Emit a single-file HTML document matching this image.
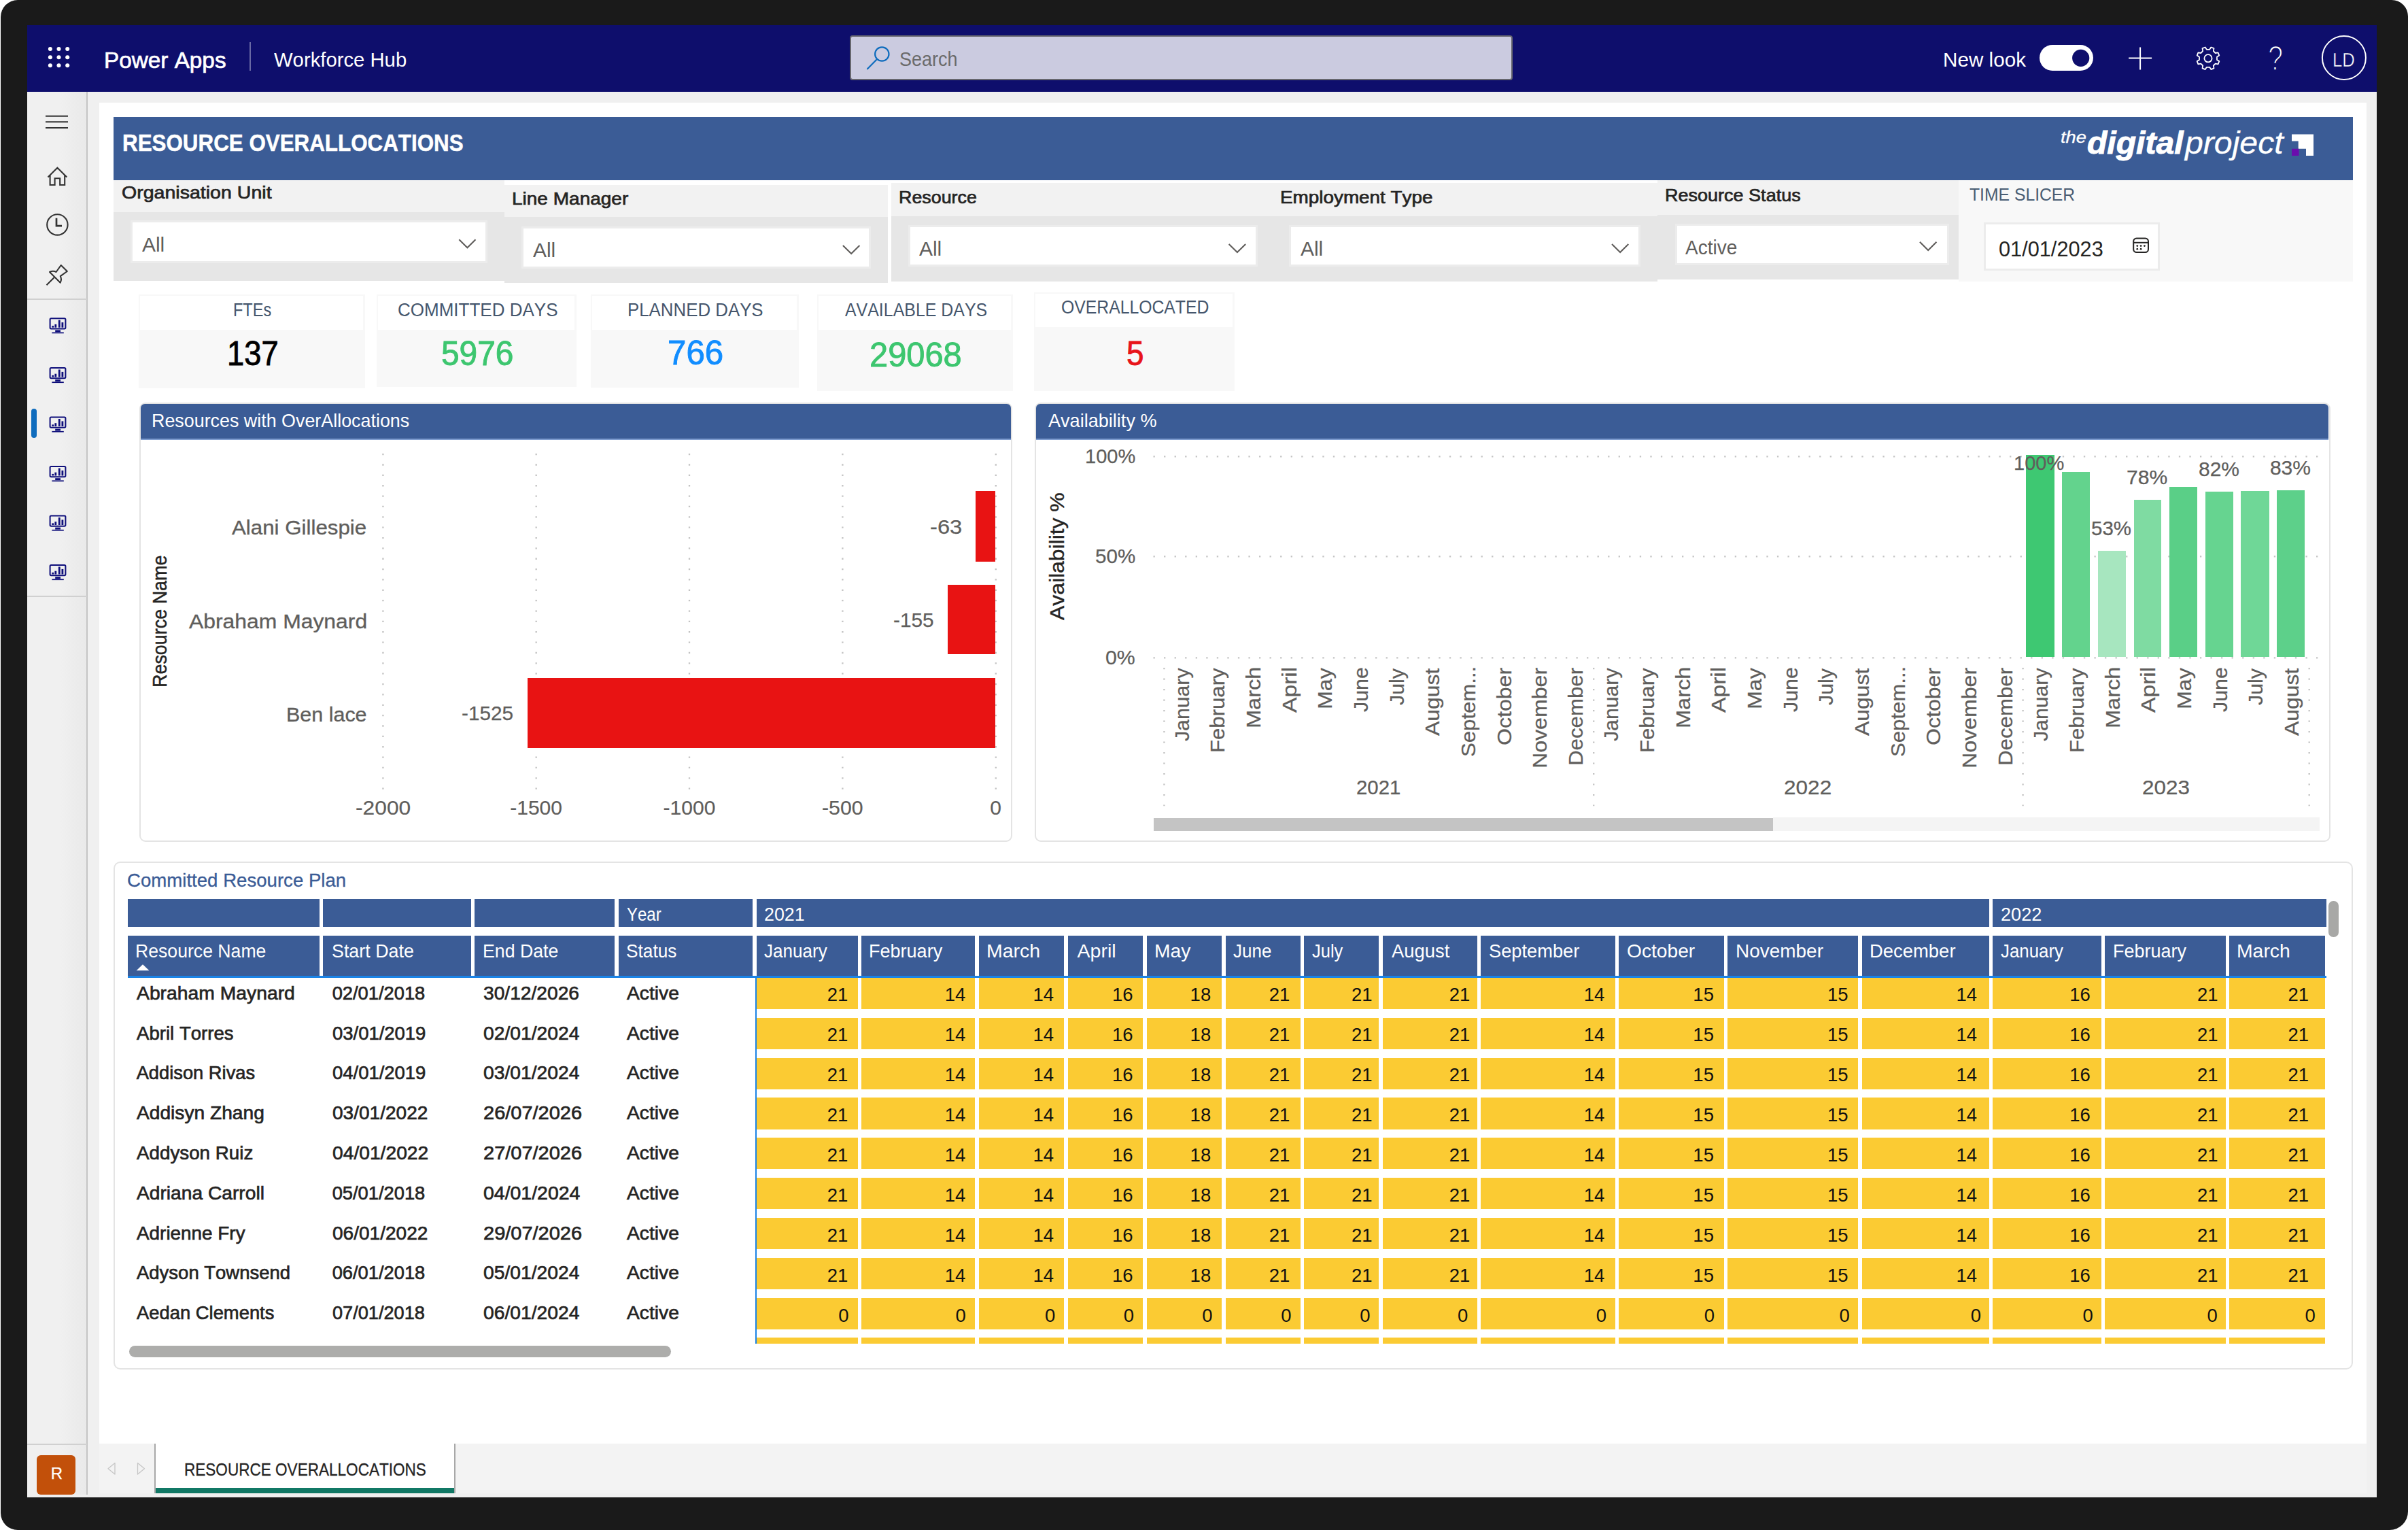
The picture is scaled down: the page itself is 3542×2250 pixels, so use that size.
<!DOCTYPE html>
<html lang="en"><head><meta charset="utf-8"><title>Resource Overallocations - Workforce Hub</title>
<style>
html,body{margin:0;padding:0}
body{width:3542px;height:2250px;position:relative;overflow:hidden;background:#fff;font-family:"Liberation Sans",sans-serif;font-kerning:none;}
.b{position:absolute;box-sizing:border-box}
.t{position:absolute;white-space:nowrap;line-height:1em;display:block;transform-origin:0 0}
.rw{position:absolute;width:0;height:0;transform:rotate(-90deg);transform-origin:0 0}
svg.ov{position:absolute;left:0;top:0;width:3542px;height:2250px;pointer-events:none}
</style></head><body>
<div class="b" style="left:1.0px;top:0.0px;width:3541.0px;height:2250.0px;background:#1a1a1a;border-radius:25px 24px 27px 25px;"></div>
<div class="b" style="left:40.0px;top:37.0px;width:3456.0px;height:2165.0px;background:#f0f0f0;"></div>
<div class="b" style="left:40.0px;top:37.0px;width:3456.0px;height:98.0px;background:#0e0e6c;"></div>
<span class="t" style="left:153.27px;top:72.00px;font-size:33.00px;color:#fff;-webkit-text-stroke:0.7px #fff;transform:scaleX(1.0091);">Power Apps</span>
<div class="b" style="left:367.0px;top:62.0px;width:2.0px;height:42.0px;background:rgba(255,255,255,0.38);"></div>
<span class="t" style="left:402.67px;top:73.00px;font-size:30.00px;color:#fff;transform:scaleX(0.9755);">Workforce Hub</span>
<div class="b" style="left:1250.0px;top:52.0px;width:975.0px;height:65.5px;background:#cbcbe0;border:2px solid #66666e;border-radius:4px;"></div>
<span class="t" style="left:1323.17px;top:72.00px;font-size:30.00px;color:#6b6b6b;transform:scaleX(0.8992);">Search</span>
<span class="t" style="left:2858.27px;top:74.00px;font-size:29.00px;color:#fff;transform:scaleX(1.0228);">New look</span>
<div class="b" style="left:2999.7px;top:66.4px;width:79.2px;height:37.6px;background:#fff;border-radius:19px;"></div>
<span class="t" style="left:3336.17px;top:61.00px;font-size:50.00px;color:#fff;-webkit-text-stroke:1.7px #0e0e6c;transform:scaleX(0.7949);">?</span>
<span class="t" style="left:3431.44px;top:73.00px;font-size:29.50px;color:#fff;-webkit-text-stroke:0.5px #0e0e6c;transform:scaleX(0.8707);">LD</span>
<div class="b" style="left:40.0px;top:135.0px;width:88.0px;height:2063.0px;background:linear-gradient(90deg,#f0f0f0 0%,#f0f0f0 55%,#e9e9e9 100%);"></div>
<div class="b" style="left:127.0px;top:135.0px;width:2.0px;height:2063.0px;background:#c4c4c4;"></div>
<div class="b" style="left:40.0px;top:439.0px;width:88.0px;height:2.0px;background:#d0d0d0;"></div>
<div class="b" style="left:40.0px;top:875.5px;width:88.0px;height:2.0px;background:#d0d0d0;"></div>
<div class="b" style="left:40.0px;top:2123.0px;width:88.0px;height:2.0px;background:#d0d0d0;"></div>
<div class="b" style="left:46.0px;top:600.8px;width:8.0px;height:43.0px;background:#0f6cbd;border-radius:4px;"></div>
<div class="b" style="left:53.8px;top:2140.0px;width:57.0px;height:57.6px;background:#c2500a;border-radius:6px;"></div>
<span class="t" style="left:74.71px;top:2155.00px;font-size:24.00px;color:#fff;-webkit-text-stroke:0.25px #fff;">R</span>
<div class="b" style="left:146.0px;top:151.0px;width:3335.0px;height:1972.4px;background:#fff;"></div>
<div class="b" style="left:146.0px;top:2123.4px;width:3335.0px;height:72.6px;background:#f3f3f3;"></div>
<div class="b" style="left:167.0px;top:172.0px;width:3294.0px;height:93.0px;background:#3b5c96;"></div>
<span class="t" style="left:179.90px;top:193.00px;font-size:34.50px;color:#fff;font-weight:700;-webkit-text-stroke:0.5px #fff;transform:scaleX(0.9087);">RESOURCE OVERALLOCATIONS</span>
<span class="t" style="left:3031.46px;top:190.00px;font-size:24.00px;color:#fff;font-style:italic;-webkit-text-stroke:0.3px #fff;transform:scaleX(1.1376);">the</span>
<span class="t" style="left:3070.44px;top:187.00px;font-size:46.00px;color:#fff;font-weight:700;font-style:italic;-webkit-text-stroke:0.9px #fff;transform:scaleX(1.0450);">digital</span>
<span class="t" style="left:3214.20px;top:187.00px;font-size:46.00px;color:#fff;font-style:italic;-webkit-text-stroke:0.3px #fff;transform:scaleX(1.0475);">project</span>
<div class="b" style="left:166.6px;top:265.0px;width:575.4px;height:47.1px;background:#f2f2f2;"></div>
<div class="b" style="left:166.6px;top:312.1px;width:575.4px;height:101.4px;background:#e6e6e6;"></div>
<span class="t" style="left:178.65px;top:270.00px;font-size:26.50px;color:#252423;-webkit-text-stroke:0.7px #252423;transform:scaleX(1.0773);">Organisation Unit</span>
<div class="b" style="left:192.2px;top:324.1px;width:524.9px;height:62.8px;background:#fff;border:3px solid #ececec;"></div>
<span class="t" style="left:208.74px;top:345.00px;font-size:29.50px;color:#605e5c;transform:scaleX(1.0145);">All</span>
<div class="b" style="left:742.0px;top:271.6px;width:564.3px;height:47.4px;background:#f2f2f2;"></div>
<div class="b" style="left:742.0px;top:319.0px;width:564.3px;height:97.0px;background:#e6e6e6;"></div>
<span class="t" style="left:753.00px;top:279.00px;font-size:26.50px;color:#252423;-webkit-text-stroke:0.7px #252423;transform:scaleX(1.0568);">Line Manager</span>
<div class="b" style="left:767.3px;top:333.0px;width:513.7px;height:61.5px;background:#fff;border:3px solid #ececec;"></div>
<span class="t" style="left:783.54px;top:353.00px;font-size:29.50px;color:#605e5c;transform:scaleX(1.0145);">All</span>
<div class="b" style="left:1311.3px;top:269.0px;width:1126.6px;height:48.5px;background:#f2f2f2;"></div>
<div class="b" style="left:1311.3px;top:317.5px;width:1126.6px;height:96.0px;background:#e6e6e6;"></div>
<span class="t" style="left:1322.40px;top:277.00px;font-size:26.50px;color:#252423;-webkit-text-stroke:0.7px #252423;transform:scaleX(1.0131);">Resource</span>
<div class="b" style="left:1336.2px;top:331.4px;width:514.0px;height:60.8px;background:#fff;border:3px solid #ececec;"></div>
<span class="t" style="left:1352.44px;top:351.00px;font-size:29.50px;color:#605e5c;transform:scaleX(1.0145);">All</span>
<span class="t" style="left:1883.11px;top:277.00px;font-size:26.50px;color:#252423;-webkit-text-stroke:0.7px #252423;transform:scaleX(1.0514);">Employment Type</span>
<div class="b" style="left:1896.3px;top:331.4px;width:517.0px;height:60.8px;background:#fff;border:3px solid #ececec;"></div>
<span class="t" style="left:1912.94px;top:351.00px;font-size:29.50px;color:#605e5c;transform:scaleX(1.0145);">All</span>
<div class="b" style="left:2437.9px;top:265.0px;width:443.1px;height:50.8px;background:#f2f2f2;"></div>
<div class="b" style="left:2437.9px;top:315.8px;width:443.1px;height:95.3px;background:#e6e6e6;"></div>
<span class="t" style="left:2448.98px;top:274.00px;font-size:26.50px;color:#252423;-webkit-text-stroke:0.7px #252423;transform:scaleX(1.0193);">Resource Status</span>
<div class="b" style="left:2463.5px;top:328.8px;width:403.3px;height:61.7px;background:#fff;border:3px solid #ececec;"></div>
<span class="t" style="left:2479.35px;top:349.00px;font-size:29.50px;color:#605e5c;transform:scaleX(0.9498);">Active</span>
<div class="b" style="left:2881.0px;top:265.0px;width:579.8px;height:148.5px;background:#f8f8f8;"></div>
<span class="t" style="left:2897.14px;top:273.00px;font-size:26.50px;color:#4a5d73;transform:scaleX(0.9328);">TIME SLICER</span>
<div class="b" style="left:2917.6px;top:326.8px;width:259.4px;height:71.7px;background:#fff;border:3px solid #ececec;"></div>
<span class="t" style="left:2940.30px;top:351.00px;font-size:30.50px;color:#252423;transform:scaleX(1.0072);">01/01/2023</span>
<div class="b" style="left:204.1px;top:433.0px;width:332.6px;height:138.2px;background:#f8f8f8;"></div>
<div class="b" style="left:206.1px;top:435.0px;width:327.6px;height:49.5px;background:#fff;"></div>
<span class="t" style="left:343.27px;top:443.00px;font-size:27.00px;color:#45566c;transform:scaleX(0.8711);">FTEs</span>
<span class="t" style="left:333.50px;top:495.00px;font-size:49.50px;color:#000;-webkit-text-stroke:0.9px #000;transform:scaleX(0.9158);">137</span>
<div class="b" style="left:554.3px;top:433.0px;width:293.4px;height:136.3px;background:#f8f8f8;"></div>
<div class="b" style="left:556.3px;top:435.0px;width:288.4px;height:49.5px;background:#fff;"></div>
<span class="t" style="left:584.68px;top:443.00px;font-size:27.00px;color:#45566c;transform:scaleX(0.9632);">COMMITTED DAYS</span>
<span class="t" style="left:649.38px;top:495.00px;font-size:49.50px;color:#3dc66f;-webkit-text-stroke:0.9px #3dc66f;transform:scaleX(0.9664);">5976</span>
<div class="b" style="left:869.0px;top:433.0px;width:306.0px;height:137.0px;background:#f8f8f8;"></div>
<div class="b" style="left:871.0px;top:435.0px;width:301.0px;height:49.5px;background:#fff;"></div>
<span class="t" style="left:923.23px;top:443.00px;font-size:27.00px;color:#45566c;transform:scaleX(0.9570);">PLANNED DAYS</span>
<span class="t" style="left:982.22px;top:494.00px;font-size:49.50px;color:#118dff;-webkit-text-stroke:0.9px #118dff;transform:scaleX(0.9952);">766</span>
<div class="b" style="left:1201.8px;top:433.0px;width:287.9px;height:141.8px;background:#f8f8f8;"></div>
<div class="b" style="left:1203.8px;top:435.0px;width:282.9px;height:49.5px;background:#fff;"></div>
<span class="t" style="left:1243.20px;top:443.00px;font-size:27.00px;color:#45566c;transform:scaleX(0.9231);">AVAILABLE DAYS</span>
<span class="t" style="left:1279.19px;top:497.00px;font-size:49.50px;color:#3dc66f;-webkit-text-stroke:0.9px #3dc66f;transform:scaleX(0.9864);">29068</span>
<div class="b" style="left:1521.0px;top:429.5px;width:295.0px;height:145.3px;background:#f8f8f8;"></div>
<div class="b" style="left:1523.0px;top:431.5px;width:290.0px;height:49.0px;background:#fff;"></div>
<span class="t" style="left:1561.33px;top:439.00px;font-size:27.00px;color:#45566c;transform:scaleX(0.9169);">OVERALLOCATED</span>
<span class="t" style="left:1657.32px;top:495.00px;font-size:49.50px;color:#e8141a;-webkit-text-stroke:0.9px #e8141a;transform:scaleX(0.9246);">5</span>
<div class="b" style="left:204.8px;top:591.6px;width:1284.4px;height:646.0px;background:#fff;border:2.2px solid #e4e4e4;border-radius:9px;"></div>
<div class="b" style="left:207.0px;top:594.0px;width:1280.0px;height:53.0px;background:#3b5c96;border-radius:6px 6px 0 0;border-bottom:2px solid #7f9dd0;"></div>
<span class="t" style="left:223.40px;top:604.00px;font-size:28.50px;color:#fff;transform:scaleX(0.9425);">Resources with OverAllocations</span>
<div class="b" style="left:1521.6px;top:591.6px;width:1906.0px;height:646.0px;background:#fff;border:2.2px solid #e4e4e4;border-radius:9px;"></div>
<div class="b" style="left:1523.8px;top:594.0px;width:1901.6px;height:53.0px;background:#3b5c96;border-radius:6px 6px 0 0;border-bottom:2px solid #7f9dd0;"></div>
<span class="t" style="left:1542.25px;top:604.00px;font-size:28.50px;color:#fff;transform:scaleX(0.9501);">Availability %</span>
<svg class="ov" viewBox="0 0 3542 2250"><circle cx="73.9" cy="72.1" r="3" fill="#fff"/>
<circle cx="73.9" cy="84.2" r="3" fill="#fff"/>
<circle cx="73.9" cy="96.3" r="3" fill="#fff"/>
<circle cx="86.5" cy="72.1" r="3" fill="#fff"/>
<circle cx="86.5" cy="84.2" r="3" fill="#fff"/>
<circle cx="86.5" cy="96.3" r="3" fill="#fff"/>
<circle cx="99.2" cy="72.1" r="3" fill="#fff"/>
<circle cx="99.2" cy="84.2" r="3" fill="#fff"/>
<circle cx="99.2" cy="96.3" r="3" fill="#fff"/>
<g fill="none" stroke="#0f6cbd" stroke-width="2.2" stroke-linecap="round"><circle cx="1297.3" cy="79.5" r="10.2"/><path d="M1290 87 L1276 101.3"/></g>
<circle cx="3060.7" cy="85.3" r="12.6" fill="#0e0e6c"/>
<path d="M3131.2 85.5H3165.1M3148.1 69.4V102.4" stroke="#fff" stroke-width="2" fill="none"/>
<path d="M3264.3 90.1 L3262.6 94.3 L3258.7 93.6 L3255.8 96.5 L3256.5 100.4 L3252.3 102.1 L3250.1 98.8 L3245.9 98.8 L3243.7 102.1 L3239.5 100.4 L3240.2 96.5 L3237.3 93.6 L3233.4 94.3 L3231.7 90.1 L3235.0 87.9 L3235.0 83.7 L3231.7 81.5 L3233.4 77.3 L3237.3 78.0 L3240.2 75.1 L3239.5 71.2 L3243.7 69.5 L3245.9 72.8 L3250.1 72.8 L3252.3 69.5 L3256.5 71.2 L3255.8 75.1 L3258.7 78.0 L3262.6 77.3 L3264.3 81.5 L3261.0 83.7 L3261.0 87.9Z" fill="none" stroke="#fff" stroke-width="1.8" stroke-linejoin="round"/>
<circle cx="3248" cy="85.8" r="5.6" fill="none" stroke="#fff" stroke-width="1.8"/>
<circle cx="3447.9" cy="85" r="32" fill="none" stroke="#fff" stroke-width="2"/>
<path d="M67 170.8H100" stroke="#333" stroke-width="2"/>
<path d="M67 179.3H100" stroke="#333" stroke-width="2"/>
<path d="M67 187.9H100" stroke="#333" stroke-width="2"/>
<path d="M70.5 260.5 L84.4 246.8 L98.3 260.5 M73.6 258 V272 H80.6 V262.3 H88.2 V272 H95.2 V258" fill="none" stroke="#333" stroke-width="2.1" stroke-linejoin="miter"/>
<circle cx="84.4" cy="330.4" r="15.2" fill="none" stroke="#333" stroke-width="2.1"/><path d="M83 320.8V332.2H91" fill="none" stroke="#333" stroke-width="2.7"/>
<path d="M68.5 419.3 L79.5 408.3 M73 400 C76 398.5 80 398.5 82.6 400 L89.7 390 L98.8 399 L88.8 406.2 C90.3 409 90.2 412.6 88.7 415.7 Z" fill="none" stroke="#333" stroke-width="2.1" stroke-linejoin="round"/>
<g><rect x="73.6" y="468.2" width="22.8" height="15.2" rx="1.6" fill="none" stroke="#0e0e7a" stroke-width="2"/><rect x="76.3" y="479.1" width="2.8" height="2.6" fill="#0e0e7a"/><rect x="80.4" y="476.9" width="2.8" height="4.8" fill="#0e0e7a"/><rect x="85.9" y="470.7" width="2.8" height="11" fill="#0e0e7a"/><rect x="90.5" y="474.1" width="2.8" height="7.6" fill="#0e0e7a"/><rect x="81.2" y="485.4" width="7.8" height="2.9" fill="#0e0e7a"/><rect x="76.4" y="488.59999999999997" width="17.4" height="1.7" fill="#0e0e7a"/></g>
<g><rect x="73.6" y="541" width="22.8" height="15.2" rx="1.6" fill="none" stroke="#0e0e7a" stroke-width="2"/><rect x="76.3" y="551.9" width="2.8" height="2.6" fill="#0e0e7a"/><rect x="80.4" y="549.7" width="2.8" height="4.8" fill="#0e0e7a"/><rect x="85.9" y="543.5" width="2.8" height="11" fill="#0e0e7a"/><rect x="90.5" y="546.9" width="2.8" height="7.6" fill="#0e0e7a"/><rect x="81.2" y="558.2" width="7.8" height="2.9" fill="#0e0e7a"/><rect x="76.4" y="561.4" width="17.4" height="1.7" fill="#0e0e7a"/></g>
<g><rect x="73.6" y="613.5" width="22.8" height="15.2" rx="1.6" fill="none" stroke="#0e0e7a" stroke-width="2"/><rect x="76.3" y="624.4" width="2.8" height="2.6" fill="#0e0e7a"/><rect x="80.4" y="622.2" width="2.8" height="4.8" fill="#0e0e7a"/><rect x="85.9" y="616.0" width="2.8" height="11" fill="#0e0e7a"/><rect x="90.5" y="619.4" width="2.8" height="7.6" fill="#0e0e7a"/><rect x="81.2" y="630.7" width="7.8" height="2.9" fill="#0e0e7a"/><rect x="76.4" y="633.9" width="17.4" height="1.7" fill="#0e0e7a"/></g>
<g><rect x="73.6" y="686" width="22.8" height="15.2" rx="1.6" fill="none" stroke="#0e0e7a" stroke-width="2"/><rect x="76.3" y="696.9" width="2.8" height="2.6" fill="#0e0e7a"/><rect x="80.4" y="694.7" width="2.8" height="4.8" fill="#0e0e7a"/><rect x="85.9" y="688.5" width="2.8" height="11" fill="#0e0e7a"/><rect x="90.5" y="691.9" width="2.8" height="7.6" fill="#0e0e7a"/><rect x="81.2" y="703.2" width="7.8" height="2.9" fill="#0e0e7a"/><rect x="76.4" y="706.4" width="17.4" height="1.7" fill="#0e0e7a"/></g>
<g><rect x="73.6" y="758.5" width="22.8" height="15.2" rx="1.6" fill="none" stroke="#0e0e7a" stroke-width="2"/><rect x="76.3" y="769.4" width="2.8" height="2.6" fill="#0e0e7a"/><rect x="80.4" y="767.2" width="2.8" height="4.8" fill="#0e0e7a"/><rect x="85.9" y="761.0" width="2.8" height="11" fill="#0e0e7a"/><rect x="90.5" y="764.4" width="2.8" height="7.6" fill="#0e0e7a"/><rect x="81.2" y="775.7" width="7.8" height="2.9" fill="#0e0e7a"/><rect x="76.4" y="778.9" width="17.4" height="1.7" fill="#0e0e7a"/></g>
<g><rect x="73.6" y="831" width="22.8" height="15.2" rx="1.6" fill="none" stroke="#0e0e7a" stroke-width="2"/><rect x="76.3" y="841.9" width="2.8" height="2.6" fill="#0e0e7a"/><rect x="80.4" y="839.7" width="2.8" height="4.8" fill="#0e0e7a"/><rect x="85.9" y="833.5" width="2.8" height="11" fill="#0e0e7a"/><rect x="90.5" y="836.9" width="2.8" height="7.6" fill="#0e0e7a"/><rect x="81.2" y="848.2" width="7.8" height="2.9" fill="#0e0e7a"/><rect x="76.4" y="851.4" width="17.4" height="1.7" fill="#0e0e7a"/></g>
<path d="M3371 197.6H3403V229H3392V218.8H3380.7V207.5H3371Z" fill="#fff"/><rect x="3371" y="218.8" width="10.5" height="10.2" fill="#6a0dad"/>
<path d="M675.3 352.3 L687.4 364.3 L699.5 352.3" fill="none" stroke="#605e5c" stroke-width="2.1"/>
<path d="M1239.9 361 L1252.15 373 L1264.4 361" fill="none" stroke="#605e5c" stroke-width="2.1"/>
<path d="M1807.6 359 L1819.9 371 L1832.2 359" fill="none" stroke="#605e5c" stroke-width="2.1"/>
<path d="M2371 359 L2383.15 371 L2395.3 359" fill="none" stroke="#605e5c" stroke-width="2.1"/>
<path d="M2823.9 355.7 L2836.2 368 L2848.5 355.7" fill="none" stroke="#605e5c" stroke-width="2.1"/>
<g fill="none" stroke="#252423" stroke-width="2"><rect x="3138.2" y="350.4" width="21.8" height="20.6" rx="4.5"/><path d="M3138.2 356.8H3160"/></g><circle cx="3143.8" cy="361.6" r="1.4" fill="#252423"/><circle cx="3143.8" cy="366.2" r="1.4" fill="#252423"/><circle cx="3149.1" cy="361.6" r="1.4" fill="#252423"/><circle cx="3149.1" cy="366.2" r="1.4" fill="#252423"/><circle cx="3154.4" cy="361.6" r="1.4" fill="#252423"/>
<path d="M563.4 667V1161.3" stroke="#c3c3c3" stroke-width="2.3" stroke-dasharray="2.3 13.059999999999999" fill="none"/>
<path d="M788.7 667V1161.3" stroke="#c3c3c3" stroke-width="2.3" stroke-dasharray="2.3 13.059999999999999" fill="none"/>
<path d="M1014 667V1161.3" stroke="#c3c3c3" stroke-width="2.3" stroke-dasharray="2.3 13.059999999999999" fill="none"/>
<path d="M1239.4 667V1161.3" stroke="#c3c3c3" stroke-width="2.3" stroke-dasharray="2.3 13.059999999999999" fill="none"/>
<path d="M1464.8 667V1161.3" stroke="#c3c3c3" stroke-width="2.3" stroke-dasharray="2.3 13.059999999999999" fill="none"/></svg>
<div class="b" style="left:1435.2px;top:722.0px;width:28.5px;height:104.0px;background:#e81313;"></div>
<div class="b" style="left:1393.7px;top:859.5px;width:70.0px;height:102.9px;background:#e81313;"></div>
<div class="b" style="left:776.2px;top:996.7px;width:687.5px;height:103.3px;background:#e81313;"></div>
<div class="rw" style="left:245px;top:1011.01px"><span class="t" style="left:0;top:-25px;font-size:29.50px;color:#252423;-webkit-text-stroke:0.45px #252423;transform:scaleX(0.9121);">Resource Name</span></div>
<span class="t" style="left:341.24px;top:761.00px;font-size:30.00px;color:#605e5c;-webkit-text-stroke:0.35px #605e5c;transform:scaleX(1.0424);">Alani Gillespie</span>
<span class="t" style="left:277.94px;top:899.00px;font-size:30.00px;color:#605e5c;-webkit-text-stroke:0.35px #605e5c;transform:scaleX(1.0621);">Abraham Maynard</span>
<span class="t" style="left:421.00px;top:1036.00px;font-size:30.00px;color:#605e5c;-webkit-text-stroke:0.35px #605e5c;transform:scaleX(1.0155);">Ben lace</span>
<span class="t" style="left:1367.55px;top:760.00px;font-size:30.00px;color:#605e5c;-webkit-text-stroke:0.25px #605e5c;transform:scaleX(1.0907);">-63</span>
<span class="t" style="left:1313.68px;top:897.00px;font-size:30.00px;color:#605e5c;-webkit-text-stroke:0.25px #605e5c;transform:scaleX(0.9921);">-155</span>
<span class="t" style="left:678.68px;top:1034.00px;font-size:30.00px;color:#605e5c;-webkit-text-stroke:0.25px #605e5c;transform:scaleX(0.9914);">-1525</span>
<span class="t" style="left:522.69px;top:1173.00px;font-size:30.00px;color:#605e5c;-webkit-text-stroke:0.2px #605e5c;transform:scaleX(1.0590);">-2000</span>
<span class="t" style="left:750.22px;top:1173.00px;font-size:30.00px;color:#605e5c;-webkit-text-stroke:0.2px #605e5c;">-1500</span>
<span class="t" style="left:975.62px;top:1173.00px;font-size:30.00px;color:#605e5c;-webkit-text-stroke:0.2px #605e5c;">-1000</span>
<span class="t" style="left:1209.06px;top:1173.00px;font-size:30.00px;color:#605e5c;-webkit-text-stroke:0.2px #605e5c;transform:scaleX(1.0080);">-500</span>
<span class="t" style="left:1456.16px;top:1173.00px;font-size:30.00px;color:#605e5c;-webkit-text-stroke:0.2px #605e5c;">0</span>
<div class="rw" style="left:1565px;top:912.31px"><span class="t" style="left:0;top:-25px;font-size:29.50px;color:#252423;-webkit-text-stroke:0.4px #252423;transform:scaleX(1.0800);">Availability %</span></div>
<span class="t" style="left:1595.59px;top:656.00px;font-size:30.00px;color:#605e5c;-webkit-text-stroke:0.25px #605e5c;transform:scaleX(0.9676);">100%</span>
<span class="t" style="left:1610.61px;top:803.00px;font-size:30.00px;color:#605e5c;-webkit-text-stroke:0.25px #605e5c;transform:scaleX(0.9866);">50%</span>
<span class="t" style="left:1626.12px;top:952.00px;font-size:30.00px;color:#605e5c;-webkit-text-stroke:0.25px #605e5c;transform:scaleX(1.0093);">0%</span>
<svg class="ov" viewBox="0 0 3542 2250"><path d="M1696.5 671.3H3414.3" stroke="#c3c3c3" stroke-width="2.3" stroke-dasharray="2.3 13.25" fill="none"/>
<path d="M1696.5 818.3H3414.3" stroke="#c3c3c3" stroke-width="2.3" stroke-dasharray="2.3 13.25" fill="none"/>
<path d="M1696.5 967.4H3414.3" stroke="#c3c3c3" stroke-width="2.3" stroke-dasharray="2.3 13.25" fill="none"/>
<path d="M1712.4 982V1185.3" stroke="#c3c3c3" stroke-width="2.3" stroke-dasharray="2.3 13.2" fill="none"/>
<path d="M2344.2 982V1185.3" stroke="#c3c3c3" stroke-width="2.3" stroke-dasharray="2.3 13.2" fill="none"/>
<path d="M2975.6 982V1185.3" stroke="#c3c3c3" stroke-width="2.3" stroke-dasharray="2.3 13.2" fill="none"/>
<path d="M3396.7 982V1185.3" stroke="#c3c3c3" stroke-width="2.3" stroke-dasharray="2.3 13.2" fill="none"/></svg>
<div class="b" style="left:2979.8px;top:668.7px;width:42.2px;height:297.7px;background:#3ec872;"></div>
<div class="b" style="left:3032.7px;top:694.4px;width:41.3px;height:272.0px;background:#63d38d;"></div>
<div class="b" style="left:3086.0px;top:810.4px;width:40.9px;height:156.0px;background:#a7e6bf;"></div>
<div class="b" style="left:3138.9px;top:734.9px;width:40.4px;height:231.5px;background:#7fdba2;"></div>
<div class="b" style="left:3190.9px;top:716.2px;width:41.3px;height:250.2px;background:#5acf87;"></div>
<div class="b" style="left:3243.8px;top:723.3px;width:41.3px;height:243.1px;background:#66d490;"></div>
<div class="b" style="left:3296.2px;top:722.0px;width:41.8px;height:244.4px;background:#6fd797;"></div>
<div class="b" style="left:3349.1px;top:720.7px;width:41.3px;height:245.7px;background:#5dd08a;"></div>
<span class="t" style="left:2962.49px;top:666.00px;font-size:30.00px;color:#605e5c;-webkit-text-stroke:0.25px #605e5c;transform:scaleX(0.9690);">100%</span>
<span class="t" style="left:3076.42px;top:762.00px;font-size:30.00px;color:#605e5c;-webkit-text-stroke:0.25px #605e5c;transform:scaleX(0.9832);">53%</span>
<span class="t" style="left:3128.45px;top:687.00px;font-size:30.00px;color:#605e5c;-webkit-text-stroke:0.25px #605e5c;transform:scaleX(1.0063);">78%</span>
<span class="t" style="left:3234.00px;top:675.00px;font-size:30.00px;color:#605e5c;-webkit-text-stroke:0.25px #605e5c;">82%</span>
<span class="t" style="left:3338.89px;top:673.00px;font-size:30.00px;color:#605e5c;-webkit-text-stroke:0.25px #605e5c;">83%</span>
<div class="rw" style="left:1749px;top:1090.07px"><span class="t" style="left:0;top:-25px;font-size:30.00px;color:#605e5c;-webkit-text-stroke:0.25px #605e5c;transform:scaleX(1.0075);">January</span></div>
<div class="rw" style="left:1801px;top:1107.15px"><span class="t" style="left:0;top:-25px;font-size:30.00px;color:#605e5c;-webkit-text-stroke:0.25px #605e5c;transform:scaleX(1.0381);">February</span></div>
<div class="rw" style="left:1854px;top:1070.77px"><span class="t" style="left:0;top:-25px;font-size:30.00px;color:#605e5c;-webkit-text-stroke:0.25px #605e5c;transform:scaleX(1.0831);">March</span></div>
<div class="rw" style="left:1907px;top:1047.67px"><span class="t" style="left:0;top:-25px;font-size:30.00px;color:#605e5c;-webkit-text-stroke:0.25px #605e5c;transform:scaleX(1.1217);">April</span></div>
<div class="rw" style="left:1959px;top:1043.24px"><span class="t" style="left:0;top:-25px;font-size:30.00px;color:#605e5c;-webkit-text-stroke:0.25px #605e5c;transform:scaleX(1.0710);">May</span></div>
<div class="rw" style="left:2012px;top:1047.07px"><span class="t" style="left:0;top:-25px;font-size:30.00px;color:#605e5c;-webkit-text-stroke:0.25px #605e5c;transform:scaleX(1.0118);">June</span></div>
<div class="rw" style="left:2065px;top:1036.57px"><span class="t" style="left:0;top:-25px;font-size:30.00px;color:#605e5c;-webkit-text-stroke:0.25px #605e5c;transform:scaleX(1.0128);">July</span></div>
<div class="rw" style="left:2117px;top:1081.66px"><span class="t" style="left:0;top:-25px;font-size:30.00px;color:#605e5c;-webkit-text-stroke:0.25px #605e5c;transform:scaleX(1.0631);">August</span></div>
<div class="rw" style="left:2170px;top:1113.01px"><span class="t" style="left:0;top:-25px;font-size:30.00px;color:#605e5c;-webkit-text-stroke:0.25px #605e5c;transform:scaleX(1.0379);">Septem...</span></div>
<div class="rw" style="left:2223px;top:1096.12px"><span class="t" style="left:0;top:-25px;font-size:30.00px;color:#605e5c;-webkit-text-stroke:0.25px #605e5c;transform:scaleX(1.0688);">October</span></div>
<div class="rw" style="left:2275px;top:1130.23px"><span class="t" style="left:0;top:-25px;font-size:30.00px;color:#605e5c;-webkit-text-stroke:0.25px #605e5c;transform:scaleX(1.0707);">November</span></div>
<div class="rw" style="left:2328px;top:1126.16px"><span class="t" style="left:0;top:-25px;font-size:30.00px;color:#605e5c;-webkit-text-stroke:0.25px #605e5c;transform:scaleX(1.0412);">December</span></div>
<div class="rw" style="left:2380px;top:1090.07px"><span class="t" style="left:0;top:-25px;font-size:30.00px;color:#605e5c;-webkit-text-stroke:0.25px #605e5c;transform:scaleX(1.0075);">January</span></div>
<div class="rw" style="left:2433px;top:1107.15px"><span class="t" style="left:0;top:-25px;font-size:30.00px;color:#605e5c;-webkit-text-stroke:0.25px #605e5c;transform:scaleX(1.0381);">February</span></div>
<div class="rw" style="left:2486px;top:1070.77px"><span class="t" style="left:0;top:-25px;font-size:30.00px;color:#605e5c;-webkit-text-stroke:0.25px #605e5c;transform:scaleX(1.0831);">March</span></div>
<div class="rw" style="left:2538px;top:1047.67px"><span class="t" style="left:0;top:-25px;font-size:30.00px;color:#605e5c;-webkit-text-stroke:0.25px #605e5c;transform:scaleX(1.1217);">April</span></div>
<div class="rw" style="left:2591px;top:1043.24px"><span class="t" style="left:0;top:-25px;font-size:30.00px;color:#605e5c;-webkit-text-stroke:0.25px #605e5c;transform:scaleX(1.0710);">May</span></div>
<div class="rw" style="left:2644px;top:1047.07px"><span class="t" style="left:0;top:-25px;font-size:30.00px;color:#605e5c;-webkit-text-stroke:0.25px #605e5c;transform:scaleX(1.0118);">June</span></div>
<div class="rw" style="left:2696px;top:1036.57px"><span class="t" style="left:0;top:-25px;font-size:30.00px;color:#605e5c;-webkit-text-stroke:0.25px #605e5c;transform:scaleX(1.0128);">July</span></div>
<div class="rw" style="left:2749px;top:1081.66px"><span class="t" style="left:0;top:-25px;font-size:30.00px;color:#605e5c;-webkit-text-stroke:0.25px #605e5c;transform:scaleX(1.0631);">August</span></div>
<div class="rw" style="left:2802px;top:1113.01px"><span class="t" style="left:0;top:-25px;font-size:30.00px;color:#605e5c;-webkit-text-stroke:0.25px #605e5c;transform:scaleX(1.0379);">Septem...</span></div>
<div class="rw" style="left:2854px;top:1096.12px"><span class="t" style="left:0;top:-25px;font-size:30.00px;color:#605e5c;-webkit-text-stroke:0.25px #605e5c;transform:scaleX(1.0688);">October</span></div>
<div class="rw" style="left:2907px;top:1130.23px"><span class="t" style="left:0;top:-25px;font-size:30.00px;color:#605e5c;-webkit-text-stroke:0.25px #605e5c;transform:scaleX(1.0707);">November</span></div>
<div class="rw" style="left:2960px;top:1126.16px"><span class="t" style="left:0;top:-25px;font-size:30.00px;color:#605e5c;-webkit-text-stroke:0.25px #605e5c;transform:scaleX(1.0412);">December</span></div>
<div class="rw" style="left:3012px;top:1090.07px"><span class="t" style="left:0;top:-25px;font-size:30.00px;color:#605e5c;-webkit-text-stroke:0.25px #605e5c;transform:scaleX(1.0075);">January</span></div>
<div class="rw" style="left:3065px;top:1107.15px"><span class="t" style="left:0;top:-25px;font-size:30.00px;color:#605e5c;-webkit-text-stroke:0.25px #605e5c;transform:scaleX(1.0381);">February</span></div>
<div class="rw" style="left:3118px;top:1070.77px"><span class="t" style="left:0;top:-25px;font-size:30.00px;color:#605e5c;-webkit-text-stroke:0.25px #605e5c;transform:scaleX(1.0831);">March</span></div>
<div class="rw" style="left:3170px;top:1047.67px"><span class="t" style="left:0;top:-25px;font-size:30.00px;color:#605e5c;-webkit-text-stroke:0.25px #605e5c;transform:scaleX(1.1217);">April</span></div>
<div class="rw" style="left:3223px;top:1043.24px"><span class="t" style="left:0;top:-25px;font-size:30.00px;color:#605e5c;-webkit-text-stroke:0.25px #605e5c;transform:scaleX(1.0710);">May</span></div>
<div class="rw" style="left:3276px;top:1047.07px"><span class="t" style="left:0;top:-25px;font-size:30.00px;color:#605e5c;-webkit-text-stroke:0.25px #605e5c;transform:scaleX(1.0118);">June</span></div>
<div class="rw" style="left:3328px;top:1036.57px"><span class="t" style="left:0;top:-25px;font-size:30.00px;color:#605e5c;-webkit-text-stroke:0.25px #605e5c;transform:scaleX(1.0128);">July</span></div>
<div class="rw" style="left:3381px;top:1081.66px"><span class="t" style="left:0;top:-25px;font-size:30.00px;color:#605e5c;-webkit-text-stroke:0.25px #605e5c;transform:scaleX(1.0631);">August</span></div>
<span class="t" style="left:1994.77px;top:1143.00px;font-size:30.00px;color:#605e5c;-webkit-text-stroke:0.25px #605e5c;transform:scaleX(0.9802);">2021</span>
<span class="t" style="left:2623.91px;top:1143.00px;font-size:30.00px;color:#605e5c;-webkit-text-stroke:0.25px #605e5c;transform:scaleX(1.0515);">2022</span>
<span class="t" style="left:3150.52px;top:1143.00px;font-size:30.00px;color:#605e5c;-webkit-text-stroke:0.25px #605e5c;transform:scaleX(1.0483);">2023</span>
<div class="b" style="left:2607.8px;top:1201.5px;width:804.2px;height:20.5px;background:#f4f4f4;"></div>
<div class="b" style="left:1697.0px;top:1203.0px;width:910.8px;height:19.0px;background:#c4c4c4;"></div>
<div class="b" style="left:167.0px;top:1266.5px;width:3293.5px;height:747.5px;background:#fff;border:2px solid #e4e4e4;border-radius:10px;"></div>
<span class="t" style="left:186.80px;top:1281.00px;font-size:28.00px;color:#3b5c96;-webkit-text-stroke:0.3px #3b5c96;transform:scaleX(0.9859);">Committed Resource Plan</span>
<div class="b" style="left:187.8px;top:1322.0px;width:282.4px;height:41.0px;background:#3b5c96;"></div>
<div class="b" style="left:187.8px;top:1376.0px;width:282.4px;height:59.4px;background:#3b5c96;"></div>
<div class="b" style="left:475.2px;top:1322.0px;width:217.6px;height:41.0px;background:#3b5c96;"></div>
<div class="b" style="left:475.2px;top:1376.0px;width:217.6px;height:59.4px;background:#3b5c96;"></div>
<div class="b" style="left:698.2px;top:1322.0px;width:205.5px;height:41.0px;background:#3b5c96;"></div>
<div class="b" style="left:698.2px;top:1376.0px;width:205.5px;height:59.4px;background:#3b5c96;"></div>
<div class="b" style="left:909.6px;top:1322.0px;width:197.6px;height:41.0px;background:#3b5c96;"></div>
<div class="b" style="left:909.6px;top:1376.0px;width:197.6px;height:59.4px;background:#3b5c96;"></div>
<div class="b" style="left:1113.1px;top:1322.0px;width:1813.2px;height:41.0px;background:#3b5c96;"></div>
<div class="b" style="left:2931.4px;top:1322.0px;width:490.4px;height:41.0px;background:#3b5c96;"></div>
<div class="b" style="left:1113.1px;top:1376.0px;width:148.7px;height:59.4px;background:#3b5c96;"></div>
<span class="t" style="left:1124.49px;top:1384.00px;font-size:28.50px;color:#fff;transform:scaleX(0.9139);">January</span>
<div class="b" style="left:1267.2px;top:1376.0px;width:166.9px;height:59.4px;background:#3b5c96;"></div>
<span class="t" style="left:1278.38px;top:1384.00px;font-size:28.50px;color:#fff;transform:scaleX(0.9485);">February</span>
<div class="b" style="left:1439.9px;top:1376.0px;width:125.5px;height:59.4px;background:#3b5c96;"></div>
<span class="t" style="left:1450.97px;top:1384.00px;font-size:28.50px;color:#fff;">March</span>
<div class="b" style="left:1571.2px;top:1376.0px;width:109.6px;height:59.4px;background:#3b5c96;"></div>
<span class="t" style="left:1584.54px;top:1384.00px;font-size:28.50px;color:#fff;">April</span>
<div class="b" style="left:1686.6px;top:1376.0px;width:110.1px;height:59.4px;background:#3b5c96;"></div>
<span class="t" style="left:1697.68px;top:1384.00px;font-size:28.50px;color:#fff;transform:scaleX(0.9913);">May</span>
<div class="b" style="left:1802.5px;top:1376.0px;width:110.0px;height:59.4px;background:#3b5c96;"></div>
<span class="t" style="left:1813.89px;top:1384.00px;font-size:28.50px;color:#fff;transform:scaleX(0.9120);">June</span>
<div class="b" style="left:1918.3px;top:1376.0px;width:109.8px;height:59.4px;background:#3b5c96;"></div>
<span class="t" style="left:1929.70px;top:1384.00px;font-size:28.50px;color:#fff;transform:scaleX(0.8948);">July</span>
<div class="b" style="left:2033.6px;top:1376.0px;width:139.0px;height:59.4px;background:#3b5c96;"></div>
<span class="t" style="left:2046.95px;top:1384.00px;font-size:28.50px;color:#fff;transform:scaleX(0.9620);">August</span>
<div class="b" style="left:2178.0px;top:1376.0px;width:197.7px;height:59.4px;background:#3b5c96;"></div>
<span class="t" style="left:2190.16px;top:1384.00px;font-size:28.50px;color:#fff;transform:scaleX(0.9561);">September</span>
<div class="b" style="left:2381.0px;top:1376.0px;width:154.5px;height:59.4px;background:#3b5c96;"></div>
<span class="t" style="left:2393.07px;top:1384.00px;font-size:28.50px;color:#fff;transform:scaleX(0.9884);">October</span>
<div class="b" style="left:2541.4px;top:1376.0px;width:191.8px;height:59.4px;background:#3b5c96;"></div>
<span class="t" style="left:2552.51px;top:1384.00px;font-size:28.50px;color:#fff;transform:scaleX(0.9809);">November</span>
<div class="b" style="left:2739.0px;top:1376.0px;width:187.3px;height:59.4px;background:#3b5c96;"></div>
<span class="t" style="left:2750.15px;top:1384.00px;font-size:28.50px;color:#fff;transform:scaleX(0.9623);">December</span>
<div class="b" style="left:2931.4px;top:1376.0px;width:160.1px;height:59.4px;background:#3b5c96;"></div>
<span class="t" style="left:2942.80px;top:1384.00px;font-size:28.50px;color:#fff;transform:scaleX(0.9069);">January</span>
<div class="b" style="left:3096.4px;top:1376.0px;width:177.5px;height:59.4px;background:#3b5c96;"></div>
<span class="t" style="left:3107.59px;top:1384.00px;font-size:28.50px;color:#fff;transform:scaleX(0.9467);">February</span>
<div class="b" style="left:3278.8px;top:1376.0px;width:140.9px;height:59.4px;background:#3b5c96;"></div>
<span class="t" style="left:3289.87px;top:1384.00px;font-size:28.50px;color:#fff;transform:scaleX(0.9948);">March</span>
<div class="b" style="left:187.8px;top:1435.2px;width:3234.0px;height:2.6px;background:#1a83e6;"></div>
<span class="t" style="left:921.87px;top:1330.00px;font-size:28.50px;color:#fff;transform:scaleX(0.8426);">Year</span>
<span class="t" style="left:1123.85px;top:1330.00px;font-size:28.50px;color:#fff;transform:scaleX(0.9410);">2021</span>
<span class="t" style="left:2943.44px;top:1330.00px;font-size:28.50px;color:#fff;transform:scaleX(0.9515);">2022</span>
<span class="t" style="left:198.52px;top:1384.00px;font-size:28.50px;color:#fff;transform:scaleX(0.9342);">Resource Name</span>
<span class="t" style="left:488.48px;top:1384.00px;font-size:28.50px;color:#fff;transform:scaleX(0.9416);">Start Date</span>
<span class="t" style="left:710.11px;top:1384.00px;font-size:28.50px;color:#fff;transform:scaleX(0.9373);">End Date</span>
<span class="t" style="left:921.21px;top:1384.00px;font-size:28.50px;color:#fff;transform:scaleX(0.9213);">Status</span>
<div class="b" style="left:1110.7px;top:1437.0px;width:2.1px;height:538.8px;background:#1a83e6;"></div>
<span class="t" style="left:200.64px;top:1447.00px;font-size:27.30px;color:#252423;-webkit-text-stroke:0.65px #252423;transform:scaleX(1.0370);">Abraham Maynard</span>
<span class="t" style="left:488.64px;top:1447.00px;font-size:27.30px;color:#252423;-webkit-text-stroke:0.65px #252423;">02/01/2018</span>
<span class="t" style="left:711.23px;top:1447.00px;font-size:27.30px;color:#252423;-webkit-text-stroke:0.65px #252423;transform:scaleX(1.0320);">30/12/2026</span>
<span class="t" style="left:922.34px;top:1447.00px;font-size:27.30px;color:#252423;-webkit-text-stroke:0.65px #252423;transform:scaleX(1.0345);">Active</span>
<div class="b" style="left:1113.1px;top:1437.9px;width:148.7px;height:46.3px;background:#fbcb33;"></div>
<span class="t" style="left:1216.75px;top:1449.00px;font-size:27.50px;color:#111;">21</span>
<div class="b" style="left:1267.2px;top:1437.9px;width:166.9px;height:46.3px;background:#fbcb33;"></div>
<span class="t" style="left:1389.82px;top:1449.00px;font-size:27.50px;color:#111;">14</span>
<div class="b" style="left:1439.9px;top:1437.9px;width:125.5px;height:46.3px;background:#fbcb33;"></div>
<span class="t" style="left:1519.42px;top:1449.00px;font-size:27.50px;color:#111;">14</span>
<div class="b" style="left:1571.2px;top:1437.9px;width:109.6px;height:46.3px;background:#fbcb33;"></div>
<span class="t" style="left:1636.02px;top:1449.00px;font-size:27.50px;color:#111;">16</span>
<div class="b" style="left:1686.6px;top:1437.9px;width:110.1px;height:46.3px;background:#fbcb33;"></div>
<span class="t" style="left:1750.61px;top:1449.00px;font-size:27.50px;color:#111;">18</span>
<div class="b" style="left:1802.5px;top:1437.9px;width:110.0px;height:46.3px;background:#fbcb33;"></div>
<span class="t" style="left:1866.65px;top:1449.00px;font-size:27.50px;color:#111;">21</span>
<div class="b" style="left:1918.3px;top:1437.9px;width:109.8px;height:46.3px;background:#fbcb33;"></div>
<span class="t" style="left:1988.05px;top:1449.00px;font-size:27.50px;color:#111;">21</span>
<div class="b" style="left:2033.6px;top:1437.9px;width:139.0px;height:46.3px;background:#fbcb33;"></div>
<span class="t" style="left:2131.75px;top:1449.00px;font-size:27.50px;color:#111;">21</span>
<div class="b" style="left:2178.0px;top:1437.9px;width:197.7px;height:46.3px;background:#fbcb33;"></div>
<span class="t" style="left:2329.72px;top:1449.00px;font-size:27.50px;color:#111;">14</span>
<div class="b" style="left:2381.0px;top:1437.9px;width:154.5px;height:46.3px;background:#fbcb33;"></div>
<span class="t" style="left:2490.37px;top:1449.00px;font-size:27.50px;color:#111;">15</span>
<div class="b" style="left:2541.4px;top:1437.9px;width:191.8px;height:46.3px;background:#fbcb33;"></div>
<span class="t" style="left:2687.97px;top:1449.00px;font-size:27.50px;color:#111;">15</span>
<div class="b" style="left:2739.0px;top:1437.9px;width:187.3px;height:46.3px;background:#fbcb33;"></div>
<span class="t" style="left:2877.42px;top:1449.00px;font-size:27.50px;color:#111;">14</span>
<div class="b" style="left:2931.4px;top:1437.9px;width:160.1px;height:46.3px;background:#fbcb33;"></div>
<span class="t" style="left:3044.22px;top:1449.00px;font-size:27.50px;color:#111;">16</span>
<div class="b" style="left:3096.4px;top:1437.9px;width:177.5px;height:46.3px;background:#fbcb33;"></div>
<span class="t" style="left:3232.05px;top:1449.00px;font-size:27.50px;color:#111;">21</span>
<div class="b" style="left:3278.8px;top:1437.9px;width:140.9px;height:46.3px;background:#fbcb33;"></div>
<span class="t" style="left:3365.45px;top:1449.00px;font-size:27.50px;color:#111;">21</span>
<span class="t" style="left:200.65px;top:1506.00px;font-size:27.30px;color:#252423;-webkit-text-stroke:0.65px #252423;transform:scaleX(1.0112);">Abril Torres</span>
<span class="t" style="left:488.63px;top:1506.00px;font-size:27.30px;color:#252423;-webkit-text-stroke:0.65px #252423;transform:scaleX(1.0054);">03/01/2019</span>
<span class="t" style="left:711.20px;top:1506.00px;font-size:27.30px;color:#252423;-webkit-text-stroke:0.65px #252423;transform:scaleX(1.0351);">02/01/2024</span>
<span class="t" style="left:922.34px;top:1506.00px;font-size:27.30px;color:#252423;-webkit-text-stroke:0.65px #252423;transform:scaleX(1.0345);">Active</span>
<div class="b" style="left:1113.1px;top:1496.7px;width:148.7px;height:46.3px;background:#fbcb33;"></div>
<span class="t" style="left:1216.75px;top:1508.00px;font-size:27.50px;color:#111;">21</span>
<div class="b" style="left:1267.2px;top:1496.7px;width:166.9px;height:46.3px;background:#fbcb33;"></div>
<span class="t" style="left:1389.82px;top:1508.00px;font-size:27.50px;color:#111;">14</span>
<div class="b" style="left:1439.9px;top:1496.7px;width:125.5px;height:46.3px;background:#fbcb33;"></div>
<span class="t" style="left:1519.42px;top:1508.00px;font-size:27.50px;color:#111;">14</span>
<div class="b" style="left:1571.2px;top:1496.7px;width:109.6px;height:46.3px;background:#fbcb33;"></div>
<span class="t" style="left:1636.02px;top:1508.00px;font-size:27.50px;color:#111;">16</span>
<div class="b" style="left:1686.6px;top:1496.7px;width:110.1px;height:46.3px;background:#fbcb33;"></div>
<span class="t" style="left:1750.61px;top:1508.00px;font-size:27.50px;color:#111;">18</span>
<div class="b" style="left:1802.5px;top:1496.7px;width:110.0px;height:46.3px;background:#fbcb33;"></div>
<span class="t" style="left:1866.65px;top:1508.00px;font-size:27.50px;color:#111;">21</span>
<div class="b" style="left:1918.3px;top:1496.7px;width:109.8px;height:46.3px;background:#fbcb33;"></div>
<span class="t" style="left:1988.05px;top:1508.00px;font-size:27.50px;color:#111;">21</span>
<div class="b" style="left:2033.6px;top:1496.7px;width:139.0px;height:46.3px;background:#fbcb33;"></div>
<span class="t" style="left:2131.75px;top:1508.00px;font-size:27.50px;color:#111;">21</span>
<div class="b" style="left:2178.0px;top:1496.7px;width:197.7px;height:46.3px;background:#fbcb33;"></div>
<span class="t" style="left:2329.72px;top:1508.00px;font-size:27.50px;color:#111;">14</span>
<div class="b" style="left:2381.0px;top:1496.7px;width:154.5px;height:46.3px;background:#fbcb33;"></div>
<span class="t" style="left:2490.37px;top:1508.00px;font-size:27.50px;color:#111;">15</span>
<div class="b" style="left:2541.4px;top:1496.7px;width:191.8px;height:46.3px;background:#fbcb33;"></div>
<span class="t" style="left:2687.97px;top:1508.00px;font-size:27.50px;color:#111;">15</span>
<div class="b" style="left:2739.0px;top:1496.7px;width:187.3px;height:46.3px;background:#fbcb33;"></div>
<span class="t" style="left:2877.42px;top:1508.00px;font-size:27.50px;color:#111;">14</span>
<div class="b" style="left:2931.4px;top:1496.7px;width:160.1px;height:46.3px;background:#fbcb33;"></div>
<span class="t" style="left:3044.22px;top:1508.00px;font-size:27.50px;color:#111;">16</span>
<div class="b" style="left:3096.4px;top:1496.7px;width:177.5px;height:46.3px;background:#fbcb33;"></div>
<span class="t" style="left:3232.05px;top:1508.00px;font-size:27.50px;color:#111;">21</span>
<div class="b" style="left:3278.8px;top:1496.7px;width:140.9px;height:46.3px;background:#fbcb33;"></div>
<span class="t" style="left:3365.45px;top:1508.00px;font-size:27.50px;color:#111;">21</span>
<span class="t" style="left:200.65px;top:1564.00px;font-size:27.30px;color:#252423;-webkit-text-stroke:0.65px #252423;">Addison Rivas</span>
<span class="t" style="left:488.63px;top:1564.00px;font-size:27.30px;color:#252423;-webkit-text-stroke:0.65px #252423;transform:scaleX(1.0054);">04/01/2019</span>
<span class="t" style="left:711.20px;top:1564.00px;font-size:27.30px;color:#252423;-webkit-text-stroke:0.65px #252423;transform:scaleX(1.0351);">03/01/2024</span>
<span class="t" style="left:922.34px;top:1564.00px;font-size:27.30px;color:#252423;-webkit-text-stroke:0.65px #252423;transform:scaleX(1.0345);">Active</span>
<div class="b" style="left:1113.1px;top:1555.6px;width:148.7px;height:46.3px;background:#fbcb33;"></div>
<span class="t" style="left:1216.75px;top:1567.00px;font-size:27.50px;color:#111;">21</span>
<div class="b" style="left:1267.2px;top:1555.6px;width:166.9px;height:46.3px;background:#fbcb33;"></div>
<span class="t" style="left:1389.82px;top:1567.00px;font-size:27.50px;color:#111;">14</span>
<div class="b" style="left:1439.9px;top:1555.6px;width:125.5px;height:46.3px;background:#fbcb33;"></div>
<span class="t" style="left:1519.42px;top:1567.00px;font-size:27.50px;color:#111;">14</span>
<div class="b" style="left:1571.2px;top:1555.6px;width:109.6px;height:46.3px;background:#fbcb33;"></div>
<span class="t" style="left:1636.02px;top:1567.00px;font-size:27.50px;color:#111;">16</span>
<div class="b" style="left:1686.6px;top:1555.6px;width:110.1px;height:46.3px;background:#fbcb33;"></div>
<span class="t" style="left:1750.61px;top:1567.00px;font-size:27.50px;color:#111;">18</span>
<div class="b" style="left:1802.5px;top:1555.6px;width:110.0px;height:46.3px;background:#fbcb33;"></div>
<span class="t" style="left:1866.65px;top:1567.00px;font-size:27.50px;color:#111;">21</span>
<div class="b" style="left:1918.3px;top:1555.6px;width:109.8px;height:46.3px;background:#fbcb33;"></div>
<span class="t" style="left:1988.05px;top:1567.00px;font-size:27.50px;color:#111;">21</span>
<div class="b" style="left:2033.6px;top:1555.6px;width:139.0px;height:46.3px;background:#fbcb33;"></div>
<span class="t" style="left:2131.75px;top:1567.00px;font-size:27.50px;color:#111;">21</span>
<div class="b" style="left:2178.0px;top:1555.6px;width:197.7px;height:46.3px;background:#fbcb33;"></div>
<span class="t" style="left:2329.72px;top:1567.00px;font-size:27.50px;color:#111;">14</span>
<div class="b" style="left:2381.0px;top:1555.6px;width:154.5px;height:46.3px;background:#fbcb33;"></div>
<span class="t" style="left:2490.37px;top:1567.00px;font-size:27.50px;color:#111;">15</span>
<div class="b" style="left:2541.4px;top:1555.6px;width:191.8px;height:46.3px;background:#fbcb33;"></div>
<span class="t" style="left:2687.97px;top:1567.00px;font-size:27.50px;color:#111;">15</span>
<div class="b" style="left:2739.0px;top:1555.6px;width:187.3px;height:46.3px;background:#fbcb33;"></div>
<span class="t" style="left:2877.42px;top:1567.00px;font-size:27.50px;color:#111;">14</span>
<div class="b" style="left:2931.4px;top:1555.6px;width:160.1px;height:46.3px;background:#fbcb33;"></div>
<span class="t" style="left:3044.22px;top:1567.00px;font-size:27.50px;color:#111;">16</span>
<div class="b" style="left:3096.4px;top:1555.6px;width:177.5px;height:46.3px;background:#fbcb33;"></div>
<span class="t" style="left:3232.05px;top:1567.00px;font-size:27.50px;color:#111;">21</span>
<div class="b" style="left:3278.8px;top:1555.6px;width:140.9px;height:46.3px;background:#fbcb33;"></div>
<span class="t" style="left:3365.45px;top:1567.00px;font-size:27.50px;color:#111;">21</span>
<span class="t" style="left:200.64px;top:1623.00px;font-size:27.30px;color:#252423;-webkit-text-stroke:0.65px #252423;transform:scaleX(1.0316);">Addisyn Zhang</span>
<span class="t" style="left:488.60px;top:1623.00px;font-size:27.30px;color:#252423;-webkit-text-stroke:0.65px #252423;transform:scaleX(1.0276);">03/01/2022</span>
<span class="t" style="left:710.84px;top:1623.00px;font-size:27.30px;color:#252423;-webkit-text-stroke:0.65px #252423;transform:scaleX(1.0622);">26/07/2026</span>
<span class="t" style="left:922.34px;top:1623.00px;font-size:27.30px;color:#252423;-webkit-text-stroke:0.65px #252423;transform:scaleX(1.0345);">Active</span>
<div class="b" style="left:1113.1px;top:1614.4px;width:148.7px;height:46.3px;background:#fbcb33;"></div>
<span class="t" style="left:1216.75px;top:1626.00px;font-size:27.50px;color:#111;">21</span>
<div class="b" style="left:1267.2px;top:1614.4px;width:166.9px;height:46.3px;background:#fbcb33;"></div>
<span class="t" style="left:1389.82px;top:1626.00px;font-size:27.50px;color:#111;">14</span>
<div class="b" style="left:1439.9px;top:1614.4px;width:125.5px;height:46.3px;background:#fbcb33;"></div>
<span class="t" style="left:1519.42px;top:1626.00px;font-size:27.50px;color:#111;">14</span>
<div class="b" style="left:1571.2px;top:1614.4px;width:109.6px;height:46.3px;background:#fbcb33;"></div>
<span class="t" style="left:1636.02px;top:1626.00px;font-size:27.50px;color:#111;">16</span>
<div class="b" style="left:1686.6px;top:1614.4px;width:110.1px;height:46.3px;background:#fbcb33;"></div>
<span class="t" style="left:1750.61px;top:1626.00px;font-size:27.50px;color:#111;">18</span>
<div class="b" style="left:1802.5px;top:1614.4px;width:110.0px;height:46.3px;background:#fbcb33;"></div>
<span class="t" style="left:1866.65px;top:1626.00px;font-size:27.50px;color:#111;">21</span>
<div class="b" style="left:1918.3px;top:1614.4px;width:109.8px;height:46.3px;background:#fbcb33;"></div>
<span class="t" style="left:1988.05px;top:1626.00px;font-size:27.50px;color:#111;">21</span>
<div class="b" style="left:2033.6px;top:1614.4px;width:139.0px;height:46.3px;background:#fbcb33;"></div>
<span class="t" style="left:2131.75px;top:1626.00px;font-size:27.50px;color:#111;">21</span>
<div class="b" style="left:2178.0px;top:1614.4px;width:197.7px;height:46.3px;background:#fbcb33;"></div>
<span class="t" style="left:2329.72px;top:1626.00px;font-size:27.50px;color:#111;">14</span>
<div class="b" style="left:2381.0px;top:1614.4px;width:154.5px;height:46.3px;background:#fbcb33;"></div>
<span class="t" style="left:2490.37px;top:1626.00px;font-size:27.50px;color:#111;">15</span>
<div class="b" style="left:2541.4px;top:1614.4px;width:191.8px;height:46.3px;background:#fbcb33;"></div>
<span class="t" style="left:2687.97px;top:1626.00px;font-size:27.50px;color:#111;">15</span>
<div class="b" style="left:2739.0px;top:1614.4px;width:187.3px;height:46.3px;background:#fbcb33;"></div>
<span class="t" style="left:2877.42px;top:1626.00px;font-size:27.50px;color:#111;">14</span>
<div class="b" style="left:2931.4px;top:1614.4px;width:160.1px;height:46.3px;background:#fbcb33;"></div>
<span class="t" style="left:3044.22px;top:1626.00px;font-size:27.50px;color:#111;">16</span>
<div class="b" style="left:3096.4px;top:1614.4px;width:177.5px;height:46.3px;background:#fbcb33;"></div>
<span class="t" style="left:3232.05px;top:1626.00px;font-size:27.50px;color:#111;">21</span>
<div class="b" style="left:3278.8px;top:1614.4px;width:140.9px;height:46.3px;background:#fbcb33;"></div>
<span class="t" style="left:3365.45px;top:1626.00px;font-size:27.50px;color:#111;">21</span>
<span class="t" style="left:200.65px;top:1682.00px;font-size:27.30px;color:#252423;-webkit-text-stroke:0.65px #252423;transform:scaleX(1.0172);">Addyson Ruiz</span>
<span class="t" style="left:488.60px;top:1682.00px;font-size:27.30px;color:#252423;-webkit-text-stroke:0.65px #252423;transform:scaleX(1.0336);">04/01/2022</span>
<span class="t" style="left:710.84px;top:1682.00px;font-size:27.30px;color:#252423;-webkit-text-stroke:0.65px #252423;transform:scaleX(1.0622);">27/07/2026</span>
<span class="t" style="left:922.34px;top:1682.00px;font-size:27.30px;color:#252423;-webkit-text-stroke:0.65px #252423;transform:scaleX(1.0345);">Active</span>
<div class="b" style="left:1113.1px;top:1673.2px;width:148.7px;height:46.3px;background:#fbcb33;"></div>
<span class="t" style="left:1216.75px;top:1685.00px;font-size:27.50px;color:#111;">21</span>
<div class="b" style="left:1267.2px;top:1673.2px;width:166.9px;height:46.3px;background:#fbcb33;"></div>
<span class="t" style="left:1389.82px;top:1685.00px;font-size:27.50px;color:#111;">14</span>
<div class="b" style="left:1439.9px;top:1673.2px;width:125.5px;height:46.3px;background:#fbcb33;"></div>
<span class="t" style="left:1519.42px;top:1685.00px;font-size:27.50px;color:#111;">14</span>
<div class="b" style="left:1571.2px;top:1673.2px;width:109.6px;height:46.3px;background:#fbcb33;"></div>
<span class="t" style="left:1636.02px;top:1685.00px;font-size:27.50px;color:#111;">16</span>
<div class="b" style="left:1686.6px;top:1673.2px;width:110.1px;height:46.3px;background:#fbcb33;"></div>
<span class="t" style="left:1750.61px;top:1685.00px;font-size:27.50px;color:#111;">18</span>
<div class="b" style="left:1802.5px;top:1673.2px;width:110.0px;height:46.3px;background:#fbcb33;"></div>
<span class="t" style="left:1866.65px;top:1685.00px;font-size:27.50px;color:#111;">21</span>
<div class="b" style="left:1918.3px;top:1673.2px;width:109.8px;height:46.3px;background:#fbcb33;"></div>
<span class="t" style="left:1988.05px;top:1685.00px;font-size:27.50px;color:#111;">21</span>
<div class="b" style="left:2033.6px;top:1673.2px;width:139.0px;height:46.3px;background:#fbcb33;"></div>
<span class="t" style="left:2131.75px;top:1685.00px;font-size:27.50px;color:#111;">21</span>
<div class="b" style="left:2178.0px;top:1673.2px;width:197.7px;height:46.3px;background:#fbcb33;"></div>
<span class="t" style="left:2329.72px;top:1685.00px;font-size:27.50px;color:#111;">14</span>
<div class="b" style="left:2381.0px;top:1673.2px;width:154.5px;height:46.3px;background:#fbcb33;"></div>
<span class="t" style="left:2490.37px;top:1685.00px;font-size:27.50px;color:#111;">15</span>
<div class="b" style="left:2541.4px;top:1673.2px;width:191.8px;height:46.3px;background:#fbcb33;"></div>
<span class="t" style="left:2687.97px;top:1685.00px;font-size:27.50px;color:#111;">15</span>
<div class="b" style="left:2739.0px;top:1673.2px;width:187.3px;height:46.3px;background:#fbcb33;"></div>
<span class="t" style="left:2877.42px;top:1685.00px;font-size:27.50px;color:#111;">14</span>
<div class="b" style="left:2931.4px;top:1673.2px;width:160.1px;height:46.3px;background:#fbcb33;"></div>
<span class="t" style="left:3044.22px;top:1685.00px;font-size:27.50px;color:#111;">16</span>
<div class="b" style="left:3096.4px;top:1673.2px;width:177.5px;height:46.3px;background:#fbcb33;"></div>
<span class="t" style="left:3232.05px;top:1685.00px;font-size:27.50px;color:#111;">21</span>
<div class="b" style="left:3278.8px;top:1673.2px;width:140.9px;height:46.3px;background:#fbcb33;"></div>
<span class="t" style="left:3365.45px;top:1685.00px;font-size:27.50px;color:#111;">21</span>
<span class="t" style="left:200.64px;top:1741.00px;font-size:27.30px;color:#252423;-webkit-text-stroke:0.65px #252423;transform:scaleX(1.0322);">Adriana Carroll</span>
<span class="t" style="left:488.64px;top:1741.00px;font-size:27.30px;color:#252423;-webkit-text-stroke:0.65px #252423;">05/01/2018</span>
<span class="t" style="left:711.19px;top:1741.00px;font-size:27.30px;color:#252423;-webkit-text-stroke:0.65px #252423;transform:scaleX(1.0418);">04/01/2024</span>
<span class="t" style="left:922.34px;top:1741.00px;font-size:27.30px;color:#252423;-webkit-text-stroke:0.65px #252423;transform:scaleX(1.0345);">Active</span>
<div class="b" style="left:1113.1px;top:1732.1px;width:148.7px;height:46.3px;background:#fbcb33;"></div>
<span class="t" style="left:1216.75px;top:1744.00px;font-size:27.50px;color:#111;">21</span>
<div class="b" style="left:1267.2px;top:1732.1px;width:166.9px;height:46.3px;background:#fbcb33;"></div>
<span class="t" style="left:1389.82px;top:1744.00px;font-size:27.50px;color:#111;">14</span>
<div class="b" style="left:1439.9px;top:1732.1px;width:125.5px;height:46.3px;background:#fbcb33;"></div>
<span class="t" style="left:1519.42px;top:1744.00px;font-size:27.50px;color:#111;">14</span>
<div class="b" style="left:1571.2px;top:1732.1px;width:109.6px;height:46.3px;background:#fbcb33;"></div>
<span class="t" style="left:1636.02px;top:1744.00px;font-size:27.50px;color:#111;">16</span>
<div class="b" style="left:1686.6px;top:1732.1px;width:110.1px;height:46.3px;background:#fbcb33;"></div>
<span class="t" style="left:1750.61px;top:1744.00px;font-size:27.50px;color:#111;">18</span>
<div class="b" style="left:1802.5px;top:1732.1px;width:110.0px;height:46.3px;background:#fbcb33;"></div>
<span class="t" style="left:1866.65px;top:1744.00px;font-size:27.50px;color:#111;">21</span>
<div class="b" style="left:1918.3px;top:1732.1px;width:109.8px;height:46.3px;background:#fbcb33;"></div>
<span class="t" style="left:1988.05px;top:1744.00px;font-size:27.50px;color:#111;">21</span>
<div class="b" style="left:2033.6px;top:1732.1px;width:139.0px;height:46.3px;background:#fbcb33;"></div>
<span class="t" style="left:2131.75px;top:1744.00px;font-size:27.50px;color:#111;">21</span>
<div class="b" style="left:2178.0px;top:1732.1px;width:197.7px;height:46.3px;background:#fbcb33;"></div>
<span class="t" style="left:2329.72px;top:1744.00px;font-size:27.50px;color:#111;">14</span>
<div class="b" style="left:2381.0px;top:1732.1px;width:154.5px;height:46.3px;background:#fbcb33;"></div>
<span class="t" style="left:2490.37px;top:1744.00px;font-size:27.50px;color:#111;">15</span>
<div class="b" style="left:2541.4px;top:1732.1px;width:191.8px;height:46.3px;background:#fbcb33;"></div>
<span class="t" style="left:2687.97px;top:1744.00px;font-size:27.50px;color:#111;">15</span>
<div class="b" style="left:2739.0px;top:1732.1px;width:187.3px;height:46.3px;background:#fbcb33;"></div>
<span class="t" style="left:2877.42px;top:1744.00px;font-size:27.50px;color:#111;">14</span>
<div class="b" style="left:2931.4px;top:1732.1px;width:160.1px;height:46.3px;background:#fbcb33;"></div>
<span class="t" style="left:3044.22px;top:1744.00px;font-size:27.50px;color:#111;">16</span>
<div class="b" style="left:3096.4px;top:1732.1px;width:177.5px;height:46.3px;background:#fbcb33;"></div>
<span class="t" style="left:3232.05px;top:1744.00px;font-size:27.50px;color:#111;">21</span>
<div class="b" style="left:3278.8px;top:1732.1px;width:140.9px;height:46.3px;background:#fbcb33;"></div>
<span class="t" style="left:3365.45px;top:1744.00px;font-size:27.50px;color:#111;">21</span>
<span class="t" style="left:200.65px;top:1800.00px;font-size:27.30px;color:#252423;-webkit-text-stroke:0.65px #252423;transform:scaleX(1.0213);">Adrienne Fry</span>
<span class="t" style="left:488.60px;top:1800.00px;font-size:27.30px;color:#252423;-webkit-text-stroke:0.65px #252423;transform:scaleX(1.0276);">06/01/2022</span>
<span class="t" style="left:710.84px;top:1800.00px;font-size:27.30px;color:#252423;-webkit-text-stroke:0.65px #252423;transform:scaleX(1.0622);">29/07/2026</span>
<span class="t" style="left:922.34px;top:1800.00px;font-size:27.30px;color:#252423;-webkit-text-stroke:0.65px #252423;transform:scaleX(1.0345);">Active</span>
<div class="b" style="left:1113.1px;top:1790.9px;width:148.7px;height:46.3px;background:#fbcb33;"></div>
<span class="t" style="left:1216.75px;top:1803.00px;font-size:27.50px;color:#111;">21</span>
<div class="b" style="left:1267.2px;top:1790.9px;width:166.9px;height:46.3px;background:#fbcb33;"></div>
<span class="t" style="left:1389.82px;top:1803.00px;font-size:27.50px;color:#111;">14</span>
<div class="b" style="left:1439.9px;top:1790.9px;width:125.5px;height:46.3px;background:#fbcb33;"></div>
<span class="t" style="left:1519.42px;top:1803.00px;font-size:27.50px;color:#111;">14</span>
<div class="b" style="left:1571.2px;top:1790.9px;width:109.6px;height:46.3px;background:#fbcb33;"></div>
<span class="t" style="left:1636.02px;top:1803.00px;font-size:27.50px;color:#111;">16</span>
<div class="b" style="left:1686.6px;top:1790.9px;width:110.1px;height:46.3px;background:#fbcb33;"></div>
<span class="t" style="left:1750.61px;top:1803.00px;font-size:27.50px;color:#111;">18</span>
<div class="b" style="left:1802.5px;top:1790.9px;width:110.0px;height:46.3px;background:#fbcb33;"></div>
<span class="t" style="left:1866.65px;top:1803.00px;font-size:27.50px;color:#111;">21</span>
<div class="b" style="left:1918.3px;top:1790.9px;width:109.8px;height:46.3px;background:#fbcb33;"></div>
<span class="t" style="left:1988.05px;top:1803.00px;font-size:27.50px;color:#111;">21</span>
<div class="b" style="left:2033.6px;top:1790.9px;width:139.0px;height:46.3px;background:#fbcb33;"></div>
<span class="t" style="left:2131.75px;top:1803.00px;font-size:27.50px;color:#111;">21</span>
<div class="b" style="left:2178.0px;top:1790.9px;width:197.7px;height:46.3px;background:#fbcb33;"></div>
<span class="t" style="left:2329.72px;top:1803.00px;font-size:27.50px;color:#111;">14</span>
<div class="b" style="left:2381.0px;top:1790.9px;width:154.5px;height:46.3px;background:#fbcb33;"></div>
<span class="t" style="left:2490.37px;top:1803.00px;font-size:27.50px;color:#111;">15</span>
<div class="b" style="left:2541.4px;top:1790.9px;width:191.8px;height:46.3px;background:#fbcb33;"></div>
<span class="t" style="left:2687.97px;top:1803.00px;font-size:27.50px;color:#111;">15</span>
<div class="b" style="left:2739.0px;top:1790.9px;width:187.3px;height:46.3px;background:#fbcb33;"></div>
<span class="t" style="left:2877.42px;top:1803.00px;font-size:27.50px;color:#111;">14</span>
<div class="b" style="left:2931.4px;top:1790.9px;width:160.1px;height:46.3px;background:#fbcb33;"></div>
<span class="t" style="left:3044.22px;top:1803.00px;font-size:27.50px;color:#111;">16</span>
<div class="b" style="left:3096.4px;top:1790.9px;width:177.5px;height:46.3px;background:#fbcb33;"></div>
<span class="t" style="left:3232.05px;top:1803.00px;font-size:27.50px;color:#111;">21</span>
<div class="b" style="left:3278.8px;top:1790.9px;width:140.9px;height:46.3px;background:#fbcb33;"></div>
<span class="t" style="left:3365.45px;top:1803.00px;font-size:27.50px;color:#111;">21</span>
<span class="t" style="left:200.65px;top:1858.00px;font-size:27.30px;color:#252423;-webkit-text-stroke:0.65px #252423;transform:scaleX(1.0068);">Adyson Townsend</span>
<span class="t" style="left:488.64px;top:1858.00px;font-size:27.30px;color:#252423;-webkit-text-stroke:0.65px #252423;">06/01/2018</span>
<span class="t" style="left:711.20px;top:1858.00px;font-size:27.30px;color:#252423;-webkit-text-stroke:0.65px #252423;transform:scaleX(1.0351);">05/01/2024</span>
<span class="t" style="left:922.34px;top:1858.00px;font-size:27.30px;color:#252423;-webkit-text-stroke:0.65px #252423;transform:scaleX(1.0345);">Active</span>
<div class="b" style="left:1113.1px;top:1849.7px;width:148.7px;height:46.3px;background:#fbcb33;"></div>
<span class="t" style="left:1216.75px;top:1862.00px;font-size:27.50px;color:#111;">21</span>
<div class="b" style="left:1267.2px;top:1849.7px;width:166.9px;height:46.3px;background:#fbcb33;"></div>
<span class="t" style="left:1389.82px;top:1862.00px;font-size:27.50px;color:#111;">14</span>
<div class="b" style="left:1439.9px;top:1849.7px;width:125.5px;height:46.3px;background:#fbcb33;"></div>
<span class="t" style="left:1519.42px;top:1862.00px;font-size:27.50px;color:#111;">14</span>
<div class="b" style="left:1571.2px;top:1849.7px;width:109.6px;height:46.3px;background:#fbcb33;"></div>
<span class="t" style="left:1636.02px;top:1862.00px;font-size:27.50px;color:#111;">16</span>
<div class="b" style="left:1686.6px;top:1849.7px;width:110.1px;height:46.3px;background:#fbcb33;"></div>
<span class="t" style="left:1750.61px;top:1862.00px;font-size:27.50px;color:#111;">18</span>
<div class="b" style="left:1802.5px;top:1849.7px;width:110.0px;height:46.3px;background:#fbcb33;"></div>
<span class="t" style="left:1866.65px;top:1862.00px;font-size:27.50px;color:#111;">21</span>
<div class="b" style="left:1918.3px;top:1849.7px;width:109.8px;height:46.3px;background:#fbcb33;"></div>
<span class="t" style="left:1988.05px;top:1862.00px;font-size:27.50px;color:#111;">21</span>
<div class="b" style="left:2033.6px;top:1849.7px;width:139.0px;height:46.3px;background:#fbcb33;"></div>
<span class="t" style="left:2131.75px;top:1862.00px;font-size:27.50px;color:#111;">21</span>
<div class="b" style="left:2178.0px;top:1849.7px;width:197.7px;height:46.3px;background:#fbcb33;"></div>
<span class="t" style="left:2329.72px;top:1862.00px;font-size:27.50px;color:#111;">14</span>
<div class="b" style="left:2381.0px;top:1849.7px;width:154.5px;height:46.3px;background:#fbcb33;"></div>
<span class="t" style="left:2490.37px;top:1862.00px;font-size:27.50px;color:#111;">15</span>
<div class="b" style="left:2541.4px;top:1849.7px;width:191.8px;height:46.3px;background:#fbcb33;"></div>
<span class="t" style="left:2687.97px;top:1862.00px;font-size:27.50px;color:#111;">15</span>
<div class="b" style="left:2739.0px;top:1849.7px;width:187.3px;height:46.3px;background:#fbcb33;"></div>
<span class="t" style="left:2877.42px;top:1862.00px;font-size:27.50px;color:#111;">14</span>
<div class="b" style="left:2931.4px;top:1849.7px;width:160.1px;height:46.3px;background:#fbcb33;"></div>
<span class="t" style="left:3044.22px;top:1862.00px;font-size:27.50px;color:#111;">16</span>
<div class="b" style="left:3096.4px;top:1849.7px;width:177.5px;height:46.3px;background:#fbcb33;"></div>
<span class="t" style="left:3232.05px;top:1862.00px;font-size:27.50px;color:#111;">21</span>
<div class="b" style="left:3278.8px;top:1849.7px;width:140.9px;height:46.3px;background:#fbcb33;"></div>
<span class="t" style="left:3365.45px;top:1862.00px;font-size:27.50px;color:#111;">21</span>
<span class="t" style="left:200.65px;top:1917.00px;font-size:27.30px;color:#252423;-webkit-text-stroke:0.65px #252423;transform:scaleX(1.0030);">Aedan Clements</span>
<span class="t" style="left:488.64px;top:1917.00px;font-size:27.30px;color:#252423;-webkit-text-stroke:0.65px #252423;transform:scaleX(0.9949);">07/01/2018</span>
<span class="t" style="left:711.20px;top:1917.00px;font-size:27.30px;color:#252423;-webkit-text-stroke:0.65px #252423;transform:scaleX(1.0351);">06/01/2024</span>
<span class="t" style="left:922.34px;top:1917.00px;font-size:27.30px;color:#252423;-webkit-text-stroke:0.65px #252423;transform:scaleX(1.0345);">Active</span>
<div class="b" style="left:1113.1px;top:1908.5px;width:148.7px;height:46.3px;background:#fbcb33;"></div>
<span class="t" style="left:1233.28px;top:1921.00px;font-size:27.50px;color:#111;">0</span>
<div class="b" style="left:1267.2px;top:1908.5px;width:166.9px;height:46.3px;background:#fbcb33;"></div>
<span class="t" style="left:1405.48px;top:1921.00px;font-size:27.50px;color:#111;">0</span>
<div class="b" style="left:1439.9px;top:1908.5px;width:125.5px;height:46.3px;background:#fbcb33;"></div>
<span class="t" style="left:1537.08px;top:1921.00px;font-size:27.50px;color:#111;">0</span>
<div class="b" style="left:1571.2px;top:1908.5px;width:109.6px;height:46.3px;background:#fbcb33;"></div>
<span class="t" style="left:1652.68px;top:1921.00px;font-size:27.50px;color:#111;">0</span>
<div class="b" style="left:1686.6px;top:1908.5px;width:110.1px;height:46.3px;background:#fbcb33;"></div>
<span class="t" style="left:1768.28px;top:1921.00px;font-size:27.50px;color:#111;">0</span>
<div class="b" style="left:1802.5px;top:1908.5px;width:110.0px;height:46.3px;background:#fbcb33;"></div>
<span class="t" style="left:1884.28px;top:1921.00px;font-size:27.50px;color:#111;">0</span>
<div class="b" style="left:1918.3px;top:1908.5px;width:109.8px;height:46.3px;background:#fbcb33;"></div>
<span class="t" style="left:2000.28px;top:1921.00px;font-size:27.50px;color:#111;">0</span>
<div class="b" style="left:2033.6px;top:1908.5px;width:139.0px;height:46.3px;background:#fbcb33;"></div>
<span class="t" style="left:2144.08px;top:1921.00px;font-size:27.50px;color:#111;">0</span>
<div class="b" style="left:2178.0px;top:1908.5px;width:197.7px;height:46.3px;background:#fbcb33;"></div>
<span class="t" style="left:2347.78px;top:1921.00px;font-size:27.50px;color:#111;">0</span>
<div class="b" style="left:2381.0px;top:1908.5px;width:154.5px;height:46.3px;background:#fbcb33;"></div>
<span class="t" style="left:2506.78px;top:1921.00px;font-size:27.50px;color:#111;">0</span>
<div class="b" style="left:2541.4px;top:1908.5px;width:191.8px;height:46.3px;background:#fbcb33;"></div>
<span class="t" style="left:2705.38px;top:1921.00px;font-size:27.50px;color:#111;">0</span>
<div class="b" style="left:2739.0px;top:1908.5px;width:187.3px;height:46.3px;background:#fbcb33;"></div>
<span class="t" style="left:2898.78px;top:1921.00px;font-size:27.50px;color:#111;">0</span>
<div class="b" style="left:2931.4px;top:1908.5px;width:160.1px;height:46.3px;background:#fbcb33;"></div>
<span class="t" style="left:3063.58px;top:1921.00px;font-size:27.50px;color:#111;">0</span>
<div class="b" style="left:3096.4px;top:1908.5px;width:177.5px;height:46.3px;background:#fbcb33;"></div>
<span class="t" style="left:3246.58px;top:1921.00px;font-size:27.50px;color:#111;">0</span>
<div class="b" style="left:3278.8px;top:1908.5px;width:140.9px;height:46.3px;background:#fbcb33;"></div>
<span class="t" style="left:3390.38px;top:1921.00px;font-size:27.50px;color:#111;">0</span>
<div class="b" style="left:1113.1px;top:1967.0px;width:148.7px;height:8.8px;background:#fbcb33;"></div>
<div class="b" style="left:1267.2px;top:1967.0px;width:166.9px;height:8.8px;background:#fbcb33;"></div>
<div class="b" style="left:1439.9px;top:1967.0px;width:125.5px;height:8.8px;background:#fbcb33;"></div>
<div class="b" style="left:1571.2px;top:1967.0px;width:109.6px;height:8.8px;background:#fbcb33;"></div>
<div class="b" style="left:1686.6px;top:1967.0px;width:110.1px;height:8.8px;background:#fbcb33;"></div>
<div class="b" style="left:1802.5px;top:1967.0px;width:110.0px;height:8.8px;background:#fbcb33;"></div>
<div class="b" style="left:1918.3px;top:1967.0px;width:109.8px;height:8.8px;background:#fbcb33;"></div>
<div class="b" style="left:2033.6px;top:1967.0px;width:139.0px;height:8.8px;background:#fbcb33;"></div>
<div class="b" style="left:2178.0px;top:1967.0px;width:197.7px;height:8.8px;background:#fbcb33;"></div>
<div class="b" style="left:2381.0px;top:1967.0px;width:154.5px;height:8.8px;background:#fbcb33;"></div>
<div class="b" style="left:2541.4px;top:1967.0px;width:191.8px;height:8.8px;background:#fbcb33;"></div>
<div class="b" style="left:2739.0px;top:1967.0px;width:187.3px;height:8.8px;background:#fbcb33;"></div>
<div class="b" style="left:2931.4px;top:1967.0px;width:160.1px;height:8.8px;background:#fbcb33;"></div>
<div class="b" style="left:3096.4px;top:1967.0px;width:177.5px;height:8.8px;background:#fbcb33;"></div>
<div class="b" style="left:3278.8px;top:1967.0px;width:140.9px;height:8.8px;background:#fbcb33;"></div>
<div class="b" style="left:190.3px;top:1978.5px;width:796.5px;height:17.5px;background:#adadab;border-radius:9px;"></div>
<div class="b" style="left:3424.6px;top:1324.9px;width:15.4px;height:53.0px;background:#a8a8a6;border-radius:7px;"></div>
<div class="b" style="left:227.4px;top:2123.4px;width:442.2px;height:72.4px;background:#fff;border-left:2px solid #a8a8a8;border-right:2px solid #a8a8a8;"></div>
<div class="b" style="left:229.2px;top:2188.2px;width:438.6px;height:7.6px;background:#117865;"></div>
<span class="t" style="left:270.65px;top:2148.00px;font-size:26.00px;color:#252423;-webkit-text-stroke:0.3px #252423;transform:scaleX(0.8674);">RESOURCE OVERALLOCATIONS</span>
<svg class="ov" viewBox="0 0 3542 2250">
<path d="M200.7 1427.3 L210 1418.2 L219.4 1427.3Z" fill="#fff"/>
<path d="M169 2151.5 L159 2159.8 L169 2168 Z" fill="none" stroke="#c6c6c6" stroke-width="1.3" stroke-linejoin="round"/>
<path d="M202.5 2151.5 L212.5 2159.8 L202.5 2168 Z" fill="none" stroke="#c6c6c6" stroke-width="1.3" stroke-linejoin="round"/>
</svg>
</body></html>
